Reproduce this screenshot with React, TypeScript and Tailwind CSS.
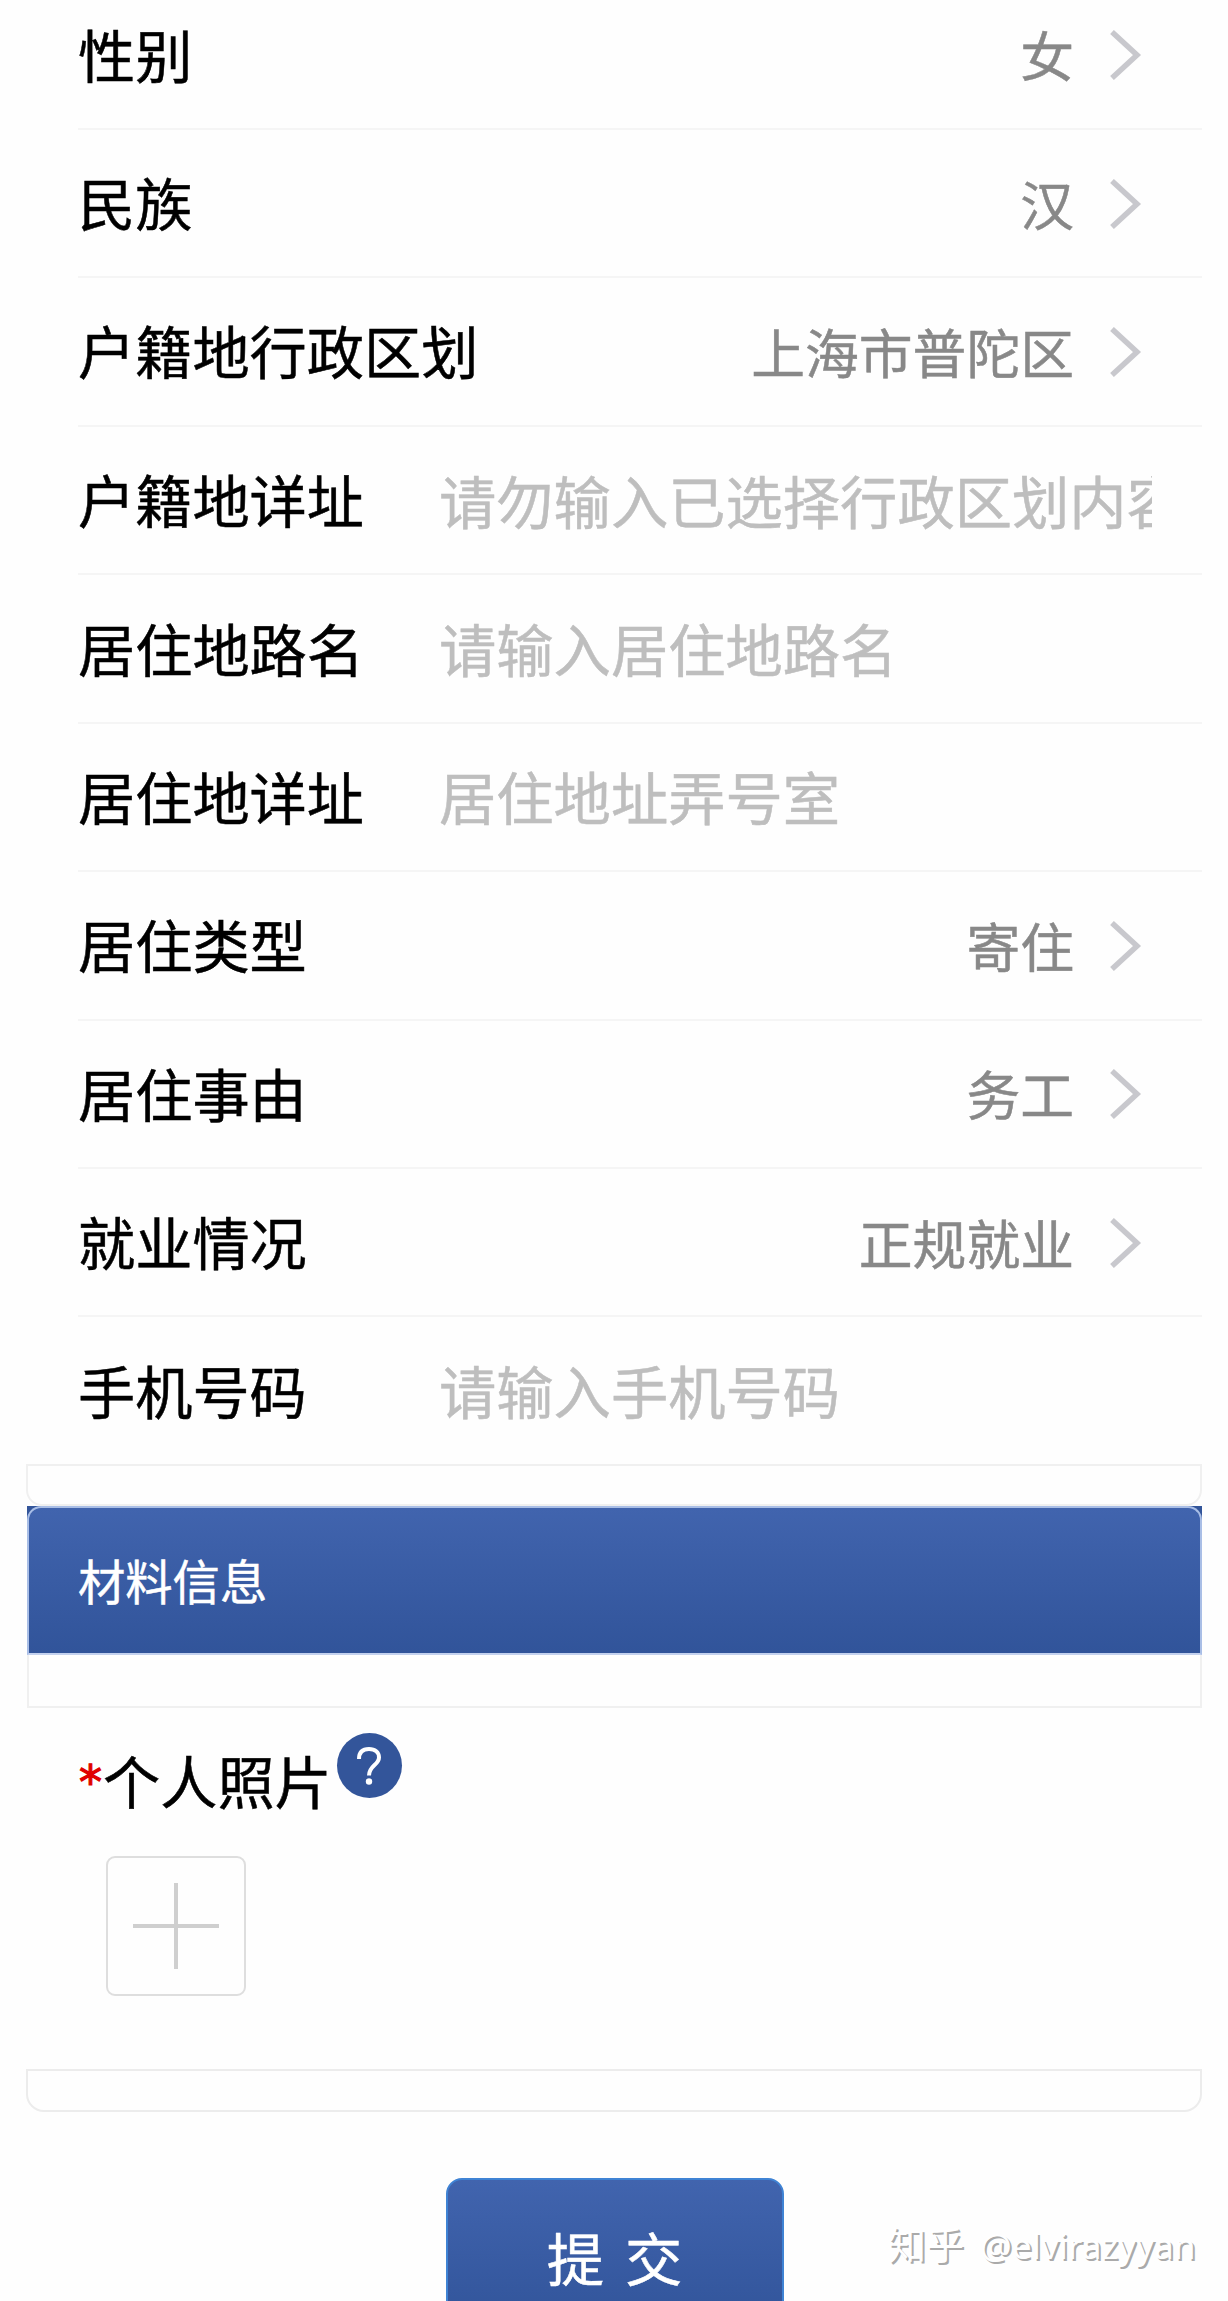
import { useState } from "react"

type Field = {
  label: string
  value?: string
  placeholder?: string
}

const fields: Field[] = [
  { label: "性别", value: "女" },
  { label: "民族", value: "汉" },
  { label: "户籍地行政区划", value: "上海市普陀区" },
  { label: "户籍地详址", placeholder: "请勿输入已选择行政区划内容" },
  { label: "居住地路名", placeholder: "请输入居住地路名" },
  { label: "居住地详址", placeholder: "居住地址弄号室" },
  { label: "居住类型", value: "寄住" },
  { label: "居住事由", value: "务工" },
  { label: "就业情况", value: "正规就业" },
  { label: "手机号码", placeholder: "请输入手机号码" },
]

function Chevron() {
  return (
    <svg
      viewBox="0 0 32 50"
      className="ml-[36px] mt-px h-[50px] w-[32px] shrink-0"
      fill="none"
      stroke="#c8c8cd"
      strokeWidth="5.5"
    >
      <path d="M2 2 L27 25 L2 48" />
    </svg>
  )
}

function FieldRow({ label, value, placeholder }: Field) {
  const [text, setText] = useState("")

  return (
    <div className="ml-[78px] mr-[26px] flex h-[148.45px] items-center border-b-2 border-[#f5f5f5]">
      {value ? (
        <>
          <span className="-mt-[3px] text-[57.2px] leading-none">{label}</span>
          <span className="-mt-[1px] ml-auto text-[53.8px] leading-none text-[#888]">{value}</span>
          <Chevron />
          <span className="w-[60px]" />
        </>
      ) : (
        <>
          <span className="-mt-[2px] w-[361px] shrink-0 text-[57.2px] leading-none">{label}</span>
          <input
            value={text}
            onChange={(e) => setText(e.target.value)}
            placeholder={placeholder}
            className="-mt-[2px] h-[90px] w-[713px] bg-transparent text-[57.3px] outline-none placeholder:text-[#bebebe]"
          />
        </>
      )}
    </div>
  )
}

export default function App() {
  return (
    <div className="h-[2301px] overflow-hidden bg-[#fefefe] font-['Noto_Sans_CJK_SC',sans-serif] text-black [-webkit-text-stroke:0.5px]">
      {/* Basic info, first row is scrolled partly out of view */}
      <div className="-mt-[18.5px] h-[1484.5px]">
        {fields.map((f) => (
          <FieldRow key={f.label} {...f} />
        ))}
      </div>
      <div className="mx-[26px] -mt-[2px] h-[42px] rounded-b-[16px] border-2 border-[#f0f0f0]" />

      {/* Material info */}
      <div className="ml-[27px] mr-[26px] bg-[#33559a]">
        <div className="flex h-[149px] items-center rounded-t-[14px] border-2 border-[#a9bee6] border-b-[#c3d1ee] bg-linear-to-b from-[#4164ae] to-[#31549a] pb-px pl-[49px] text-[47.3px] leading-none text-white">
          材料信息
        </div>
      </div>
      <div className="ml-[27px] mr-[26px] h-[53px] border-2 border-t-0 border-[#f0f0f0]" />

      <div className="flex h-[148px] items-start pl-[78px] pt-[25px]">
        <div className="flex pt-[18px] text-[57.2px] leading-none">
          <span className="w-[25px] pl-px pt-[8px] font-['DejaVu_Sans'] text-[46px] leading-none text-[#e00000] [-webkit-text-stroke:1.2px]">
            *
          </span>
          个人照片
        </div>
        <div className="ml-[5px] flex size-[65px] items-center justify-center rounded-full bg-[#33559a]">
          <svg viewBox="0 0 26 40" className="h-[40px] w-[26px]" fill="none" stroke="#fff" strokeWidth="4">
            <path d="M3 13 C3 5.500 7.500 3 13 3 C19 3 23 6.500 23 11.500 C23 19 13 19.500 13 29.500" />
            <circle cx="13" cy="35.500" r="3.2" fill="#fff" stroke="none" />
          </svg>
        </div>
      </div>
      <button className="ml-[106px] flex size-[140px] items-center justify-center rounded-[9px] border-2 border-[#dedede]">
        <svg viewBox="0 0 86 86" className="size-[86px]" stroke="#cfcfcf" strokeWidth="4">
          <path d="M0 43 H86 M43 0 V86" />
        </svg>
      </button>
      <div className="mx-[26px] mt-[73px] h-[43px] rounded-b-[18px] border-2 border-[#ececec]" />

      <div className="relative mt-[66px] flex justify-center pl-px">
        <button className="h-[150px] w-[338px] rounded-[16px] border-2 border-[#3f83d4] bg-linear-to-b from-[#4164ae] to-[#31549a] pt-[7px] text-[57.3px] leading-none text-white [word-spacing:8px]">
          提 交
        </button>
        {/* White text, only its shadow shows on the page */}
        <span className="absolute left-[888px] top-[46px] flex items-baseline gap-[16px] whitespace-nowrap text-[38px] leading-none text-white [-webkit-text-stroke:0] [text-shadow:2px_2px_0_#aaa]">
          <span>知乎</span>
          <span className="font-['Noto_Sans'] text-[35.3px]">@elvirazyyan</span>
        </span>
      </div>
    </div>
  )
}
